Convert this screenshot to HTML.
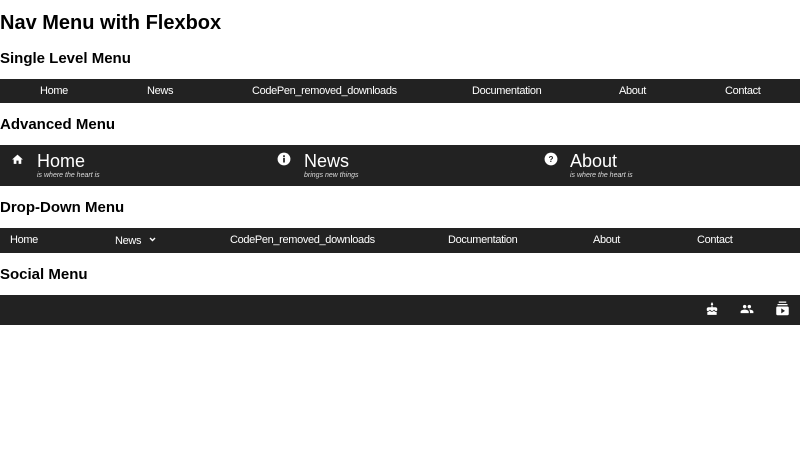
<!DOCTYPE html>
<html><head><style>
body{margin:0;width:800px;height:450px;background:#fff;font-family:"Liberation Sans",sans-serif;position:relative;overflow:hidden}
.a{position:absolute;white-space:nowrap}
h{position:absolute;left:0;font-weight:bold;color:#000}
.bar{position:absolute;left:0;width:800px;background:#222}
.t{position:absolute;color:#fff;font-size:11px;letter-spacing:-0.35px;white-space:nowrap}
.big{position:absolute;color:#fff;font-size:18px}
.sub{position:absolute;color:#ddd;font-size:7px;font-style:italic}
</style></head><body>
<h style="top:12px;font-size:20px">Nav Menu with Flexbox</h>
<h style="top:50px;font-size:15px">Single Level Menu</h>
<div class="bar" style="top:79px;height:24px"></div>
<span class="t" style="left:40px;top:85px">Home</span>
<span class="t" style="left:147px;top:85px">News</span>
<span class="t" style="left:252px;top:85px">CodePen_removed_downloads</span>
<span class="t" style="left:472px;top:85px">Documentation</span>
<span class="t" style="left:619px;top:85px">About</span>
<span class="t" style="left:725px;top:85px">Contact</span>
<h style="top:116px;font-size:15px">Advanced Menu</h>
<div class="bar" style="top:145px;height:41px"></div>
<svg class="a" style="left:11px;top:153px" width="13" height="13" viewBox="0 0 24 24"><path fill="#fff" d="M10 20v-6h4v6h5v-8h3L12 3 2 12h3v8z"/></svg>
<span class="big" style="left:37px;top:151px">Home</span><span class="sub" style="left:37px;top:172px">is where the heart is</span>
<svg class="a" style="left:277px;top:152px" width="14" height="14" viewBox="0 0 24 24"><circle cx="12" cy="12" r="11" fill="#fff"/><rect x="10.5" y="10" width="3" height="8" fill="#222"/><circle cx="12" cy="7" r="1.7" fill="#222"/></svg>
<span class="big" style="left:304px;top:151px">News</span><span class="sub" style="left:304px;top:172px">brings new things</span>
<svg class="a" style="left:544px;top:152px" width="14" height="14" viewBox="0 0 24 24"><circle cx="12" cy="12" r="11" fill="#fff"/><text x="12" y="17" font-size="14" font-weight="bold" text-anchor="middle" fill="#222" font-family="Liberation Sans">?</text></svg>
<span class="big" style="left:570px;top:151px">About</span><span class="sub" style="left:570px;top:172px">is where the heart is</span>
<h style="top:199px;font-size:15px">Drop-Down Menu</h>
<div class="bar" style="top:228px;height:25px"></div>
<span class="t" style="left:10px;top:234px">Home</span>
<span class="t" style="left:115px;top:235px">News</span>
<svg class="a" style="left:149px;top:237px" width="7" height="5" viewBox="0 0 7 5"><path d="M1 1l2.5 2.5L6 1" stroke="#fff" stroke-width="1.4" fill="none"/></svg>
<span class="t" style="left:230px;top:234px">CodePen_removed_downloads</span>
<span class="t" style="left:448px;top:234px">Documentation</span>
<span class="t" style="left:593px;top:234px">About</span>
<span class="t" style="left:697px;top:234px">Contact</span>
<h style="top:266px;font-size:15px">Social Menu</h>
<div class="bar" style="top:295px;height:30px"></div>
<svg class="a" style="left:705px;top:301px" width="14" height="16" viewBox="0 0 24 24"><path fill="#fff" d="M12 6c1.1 0 2-.9 2-2 0-.4-.1-.7-.3-1L12 0l-1.7 3c-.2.3-.3.6-.3 1 0 1.1.9 2 2 2zm6 3h-5V7h-2v2H6c-1.7 0-3 1.3-3 3v1.5c0 1.1.9 2 2 2 .5 0 1-.2 1.4-.6L8.5 13l2.1 2.1c.7.7 2 .7 2.8 0L15.5 13l2.1 1.9c.4.4.9.6 1.4.6 1.1 0 2-.9 2-2V12c0-1.7-1.3-3-3-3zm1 8c-1 0-2-.4-2.7-1.1l-1-1.1-1.1 1.1c-1.3 1.3-3.6 1.3-4.9 0l-1.1-1.1-1.1 1.1C6 16.6 5 17 4 17v5h16v-5z"/></svg>
<svg class="a" style="left:739px;top:302px" width="16" height="14" viewBox="0 0 24 24"><path fill="#fff" d="M16 11c1.7 0 3-1.3 3-3s-1.3-3-3-3-3 1.3-3 3 1.3 3 3 3zm-8 0c1.7 0 3-1.3 3-3S9.7 5 8 5 5 6.3 5 8s1.3 3 3 3zm0 2c-2.3 0-7 1.2-7 3.5V19h14v-2.5C15 14.2 10.3 13 8 13zm8 0c-.3 0-.6 0-1 .1 1.2.8 2 2 2 3.4V19h6v-2.5c0-2.3-4.7-3.5-7-3.5z"/></svg>
<svg class="a" style="left:775px;top:301px" width="15" height="16" viewBox="0 0 24 24"><path fill="#fff" d="M4 6h16V4H4v2zm2-4h12V0H6v2zm14 6H4c-1.1 0-2 .9-2 2v10c0 1.1.9 2 2 2h16c1.1 0 2-.9 2-2V10c0-1.1-.9-2-2-2zm-10 11V11l6 4-6 4z"/></svg>
</body></html>
